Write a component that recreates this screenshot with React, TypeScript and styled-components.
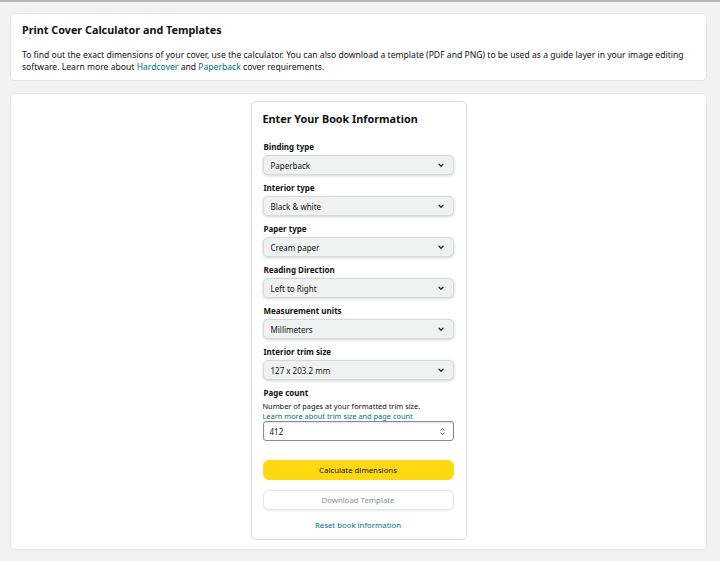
import React from "react";
import styled, { createGlobalStyle } from "styled-components";

const Global = createGlobalStyle`
  html, body {
    margin: 0;
    padding: 0;
    background: #f2f2f2;
  }
  body {
    font-family: "Noto Sans", "Open Sans", Arial, sans-serif;
    color: #0f1111;
    border-top: 2px solid #b4b4b4;
  }
  * { box-sizing: border-box; }
`;

const Page = styled.div`
  display: flex;
  flex-direction: column;
  gap: 12px;
  padding: 11px 13px 11px 10px;
`;

const Card = styled.section`
  background: #fff;
  border: 1px solid #e6e6e6;
  border-radius: 5px;
`;

const Intro = styled(Card)`
  height: 68px;
  padding: 8px 11px 0;
`;

const Title = styled.h1`
  margin: 0;
  font-size: 10.8px;
  line-height: 16px;
  font-weight: 700;
`;

const Lead = styled.p`
  margin: 11px 0 0;
  font-size: 8.6px;
  line-height: 12px;
`;

const Link = styled.a`
  color: #007185;
  text-decoration: none;
`;

const Calculator = styled(Card)`
  height: 457px;
  display: flex;
  justify-content: center;
  padding-top: 7px;
`;

const Form = styled.div`
  width: 216px;
  height: 439px;
  border: 1px solid #d9dcdc;
  border-radius: 5px;
  padding: 9px 12px 0 11px;
  display: flex;
  flex-direction: column;
`;

const FormTitle = styled.h2`
  margin: 0 0 15px;
  font-size: 10.8px;
  line-height: 16px;
  font-weight: 700;
`;

const Field = styled.div`
  display: flex;
  flex-direction: column;
  margin-bottom: 8px;
`;

const Label = styled.label`
  font-size: 8px;
  line-height: 10px;
  font-weight: 700;
  padding-left: 1px;
  margin-bottom: 3px;
`;

const Select = styled.div`
  height: 20px;
  border-radius: 5px;
  background: #f0f2f2;
  border: 1px solid #d5d9d9;
  box-shadow: 0 1px 3px rgba(15, 17, 17, 0.18);
  display: flex;
  align-items: center;
  justify-content: space-between;
  padding: 0 9px 0 7px;
  font-size: 8px;
`;

const Hint = styled.div<{ $link?: boolean }>`
  font-size: 7.4px;
  line-height: 10px;
  color: ${(p) => (p.$link ? "#007185" : "#0f1111")};
`;

const NumberBox = styled.div`
  height: 20px;
  border: 1px solid #888c8c;
  border-radius: 3px;
  display: flex;
  align-items: center;
  justify-content: space-between;
  padding: 0 8px 0 6px;
  font-size: 8px;
  box-shadow: inset 0 1px 2px rgba(15, 17, 17, 0.12);
`;

const Button = styled.button<{ $primary?: boolean }>`
  height: 20px;
  width: 100%;
  border-radius: 6px;
  font-family: inherit;
  font-size: 7.8px;
  cursor: pointer;
  background: ${(p) => (p.$primary ? "#ffd814" : "#fff")};
  border: 1px solid ${(p) => (p.$primary ? "#ffd814" : "#e3e6e6")};
  color: ${(p) => (p.$primary ? "#0f1111" : "#8d9096")};
  box-shadow: ${(p) => (p.$primary ? "none" : "0 1px 2px rgba(15,17,17,0.08)")};
`;

const Actions = styled.div`
  margin-top: 11px;
  display: flex;
  flex-direction: column;
  gap: 10px;
`;

const Reset = styled(Link)`
  margin-top: 10px;
  text-align: center;
  font-size: 7.8px;
  line-height: 10px;
`;

const Chevron = () => (
  <svg width="6" height="5" viewBox="0 0 6 5" aria-hidden>
    <path d="M1 1.3 3 3.3 5 1.3" fill="none" stroke="#2b2f2f" strokeWidth="1.4" strokeLinecap="round" strokeLinejoin="round" />
  </svg>
);

const Spinner = () => (
  <svg width="5" height="9" viewBox="0 0 5 9" aria-hidden>
    <path d="M1 3.2 2.5 1.5 4 3.2M1 5.8 2.5 7.5 4 5.8" fill="none" stroke="#555" strokeWidth="1" strokeLinecap="round" strokeLinejoin="round" />
  </svg>
);

const fields = [
  ["Binding type", "Paperback"],
  ["Interior type", "Black & white"],
  ["Paper type", "Cream paper"],
  ["Reading Direction", "Left to Right"],
  ["Measurement units", "Millimeters"],
  ["Interior trim size", "127 x 203.2 mm"],
];

export default function App() {
  return (
    <>
      <Global />
      <Page>
        <Intro>
          <Title>Print Cover Calculator and Templates</Title>
          <Lead>
            <span>
              To find out the exact dimensions of your cover, use the calculator. You can also download a template (PDF and PNG) to be used as a guide layer in your image editing software. Learn more about{" "}
            </span>
            <Link href="#">Hardcover</Link>
            <span> and </span>
            <Link href="#">Paperback</Link>
            <span> cover requirements.</span>
          </Lead>
        </Intro>
        <Calculator>
          <Form>
            <FormTitle>Enter Your Book Information</FormTitle>
            {fields.map(([label, value]) => (
              <Field key={label}>
                <Label>{label}</Label>
                <Select>
                  <span>{value}</span>
                  <Chevron />
                </Select>
              </Field>
            ))}
            <Field>
              <Label>Page count</Label>
              <Hint>Number of pages at your formatted trim size.</Hint>
              <Hint $link>Learn more about trim size and page count</Hint>
              <NumberBox>
                <span>412</span>
                <Spinner />
              </NumberBox>
            </Field>
            <Actions>
              <Button $primary>Calculate dimensions</Button>
              <Button>Download Template</Button>
            </Actions>
            <Reset href="#">Reset book information</Reset>
          </Form>
        </Calculator>
      </Page>
    </>
  );
}
